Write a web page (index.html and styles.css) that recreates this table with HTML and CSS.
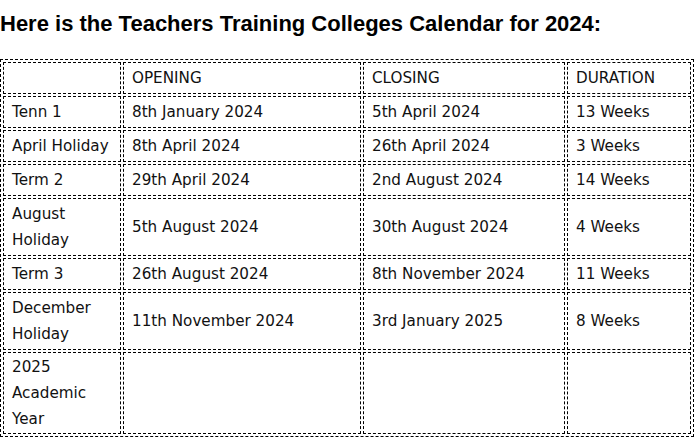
FILE: index.html
```html
<!DOCTYPE html>
<html>
<head>
<meta charset="utf-8">
<link rel="stylesheet" href="styles.css">
</head>
<body>
<h2 class="title">Here is the Teachers Training Colleges Calendar for 2024:</h2>
<table class="cal">
<tr><td class="c1"></td><td class="c2">OPENING</td><td class="c3">CLOSING</td><td class="c4">DURATION</td></tr>
<tr><td>Tenn 1</td><td>8th January 2024</td><td>5th April 2024</td><td>13 Weeks</td></tr>
<tr><td>April Holiday</td><td>8th April 2024</td><td>26th April 2024</td><td>3 Weeks</td></tr>
<tr><td>Term 2</td><td>29th April 2024</td><td>2nd August 2024</td><td>14 Weeks</td></tr>
<tr><td>August<br>Holiday</td><td>5th August 2024</td><td>30th August 2024</td><td>4 Weeks</td></tr>
<tr><td>Term 3</td><td>26th August 2024</td><td>8th November 2024</td><td>11 Weeks</td></tr>
<tr><td>December<br>Holiday</td><td>11th November 2024</td><td>3rd January 2025</td><td>8 Weeks</td></tr>
<tr class="r3"><td>2025<br>Academic<br>Year</td><td></td><td></td><td></td></tr>
</table>
</body>
</html>
```

FILE: styles.css
```css
body {
  margin: 0;
  background: #fff;
  font-family: "DejaVu Sans", Verdana, sans-serif;
  color: #111;
}
.title {
  font-family: "Liberation Sans", Arial, sans-serif;
  font-weight: bold;
  font-size: 22px;
  line-height: 26px;
  margin: 11px 0 22px 0;
  color: #000;
}
.cal {
  border: 1px dashed #000;
  border-spacing: 2px;
  width: 694px;
  font-size: 15.2px;
  line-height: 26px;
}
.cal td {
  border: 1px dashed #000;
  padding: 2px 7px 2px 8px;
  vertical-align: middle;
  text-align: left;
}
.cal .r3 td { padding-top: 1px; padding-bottom: 1px; }
.c1 { width: 101px; }
.c2 { width: 221px; }
.c3 { width: 185px; }
.c4 { width: 107px; }
```
